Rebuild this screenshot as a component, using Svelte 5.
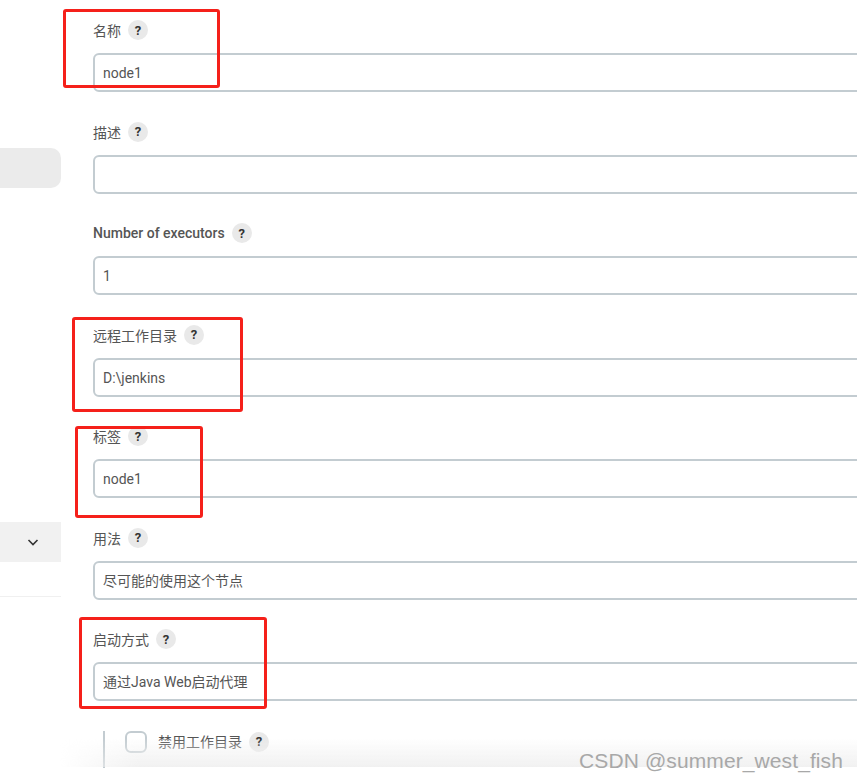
<script>
	const fields = [
		{ label: '名称', value: 'node1' },
		{ label: '描述', value: '' },
		{ label: 'Number of executors', value: '1', strong: true },
		{ label: '远程工作目录', value: 'D:\\jenkins' },
		{ label: '标签', value: 'node1' },
		{ label: '用法', value: '尽可能的使用这个节点' },
		{ label: '启动方式', value: '通过Java Web启动代理' }
	];

	const marks = [
		{ x: 63, y: 9, w: 157, h: 79 },
		{ x: 72, y: 317, w: 171, h: 95 },
		{ x: 75, y: 426, w: 128, h: 92 },
		{ x: 79, y: 617, w: 188, h: 92 }
	];
</script>

<div class="page">
	<aside class="side">
		<div class="pill"></div>
		<div class="drop">
			<svg width="14" height="14" viewBox="0 0 14 14" fill="none" stroke="#333" stroke-width="1.6">
				<path d="M2.5 5l4.5 4.5L11.500 5" />
			</svg>
		</div>
		<div class="rule"></div>
	</aside>

	<main class="form">
		{#each fields as f}
			<section class="field">
				<div class="label">
					<span class:strong={f.strong}>{f.label}</span>
					<span class="help">?</span>
				</div>
				<div class="input">{f.value}</div>
			</section>
		{/each}
		<div class="nested">
			<span class="check"></span>
			<span class="nested-label">禁用工作目录</span>
			<span class="help">?</span>
		</div>
	</main>

	{#each marks as m}
		<div class="mark" style="left:{m.x}px;top:{m.y}px;width:{m.w}px;height:{m.h}px"></div>
	{/each}

	<div class="fade"></div>
	<div class="watermark">CSDN @summer_west_fish</div>
</div>

<style>
	:global(body) {
		margin: 0;
		background: #fff;
	}
	.page {
		position: relative;
		display: flex;
		width: 857px;
		height: 781px;
		overflow: hidden;
		font-family: Roboto, 'Noto Sans CJK SC', sans-serif;
		font-size: 14px;
		color: #333;
	}
	.side {
		flex: 0 0 61px;
		padding-top: 148px;
		box-sizing: border-box;
	}
	.pill {
		height: 40px;
		background: #ebebeb;
		border-radius: 0 10px 10px 0;
	}
	.drop {
		display: flex;
		align-items: center;
		justify-content: flex-end;
		height: 40px;
		margin-top: 334px;
		padding-right: 21px;
		background: #f1f1f1;
		box-sizing: border-box;
	}
	.rule {
		height: 1px;
		margin-top: 34px;
		background: #f0f0f0;
	}
	.form {
		flex: 1;
		min-width: 0;
		padding: 20px 0 0 32px;
	}
	.field {
		height: 101.5px;
	}
	.label {
		display: flex;
		align-items: center;
		gap: 7px;
		height: 20px;
		margin-bottom: 13px;
		color: #555;
	}
	.strong {
		font-weight: 500;
	}
	.help {
		display: flex;
		align-items: center;
		justify-content: center;
		width: 20px;
		height: 20px;
		border-radius: 50%;
		background: #e9e9e9;
		font-size: 13px;
		font-weight: 700;
		color: #333;
	}
	.input {
		box-sizing: border-box;
		width: 780px;
		height: 39px;
		padding: 0 8px;
		line-height: 37px;
		border: 2px solid #c3ccd1;
		border-radius: 6px;
		color: #555;
	}
	.nested {
		display: flex;
		align-items: flex-start;
		height: 37px;
		margin-left: 10px;
		padding-left: 20px;
		border-left: 2px solid #c3ccd1;
	}
	.nested .help {
		margin-top: 1px;
	}
	.check {
		box-sizing: border-box;
		width: 22px;
		height: 22px;
		margin-right: 11px;
		border: 2px solid #c3ccd1;
		border-radius: 6px;
	}
	.nested-label {
		margin-right: 7px;
		line-height: 22px;
		color: #555;
	}
	.mark {
		position: absolute;
		box-sizing: border-box;
		border: 3px solid #f5201a;
		border-radius: 3px;
	}
	.fade {
		position: absolute;
		left: 60px;
		right: 0;
		top: 738px;
		height: 29px;
		background: linear-gradient(to bottom, rgba(240, 240, 240, 0), #f1f1f1);
		mask-image: linear-gradient(to right, transparent, #000 80px);
	}
	.watermark {
		position: absolute;
		right: 14px;
		top: 749px;
		font-family: 'Liberation Sans', sans-serif;
		font-size: 21px;
		letter-spacing: 0.1px;
		line-height: 24px;
		color: #a8a8a8;
		white-space: nowrap;
	}
</style>
